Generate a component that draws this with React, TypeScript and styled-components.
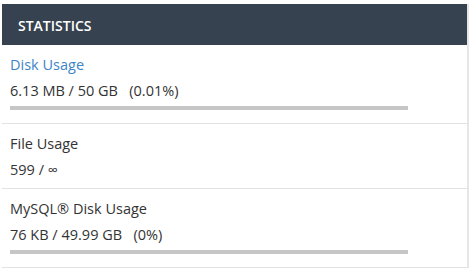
import React from "react";
import styled, { createGlobalStyle } from "styled-components";

const Global = createGlobalStyle`
  html, body { margin: 0; padding: 0; background: #ffffff; }
  body { font-family: "Open Sans", "Noto Sans", Arial, sans-serif; color: #333333; }
`;

const Panel = styled.section`
  margin: 4px 0 0 2px;
  width: 467px;
  border-right: 2px solid #e6e6e6;
  box-sizing: border-box;
  background: #ffffff;
`;

const Header = styled.header`
  height: 41px;
  display: flex;
  align-items: center;
  padding: 2px 0 0 16px;
  box-sizing: border-box;
  background: #36424f;
  color: #ffffff;
  font-size: 14px;
  font-weight: 600;
  text-transform: uppercase;
  letter-spacing: 0;
`;

const Row = styled.div`
  padding: 10px 8px 8px 8px;
  border-bottom: 1px solid #e2e2e2;
`;

const Title = styled.div<{ $link?: boolean }>`
  font-size: 14.5px;
  line-height: 20px;
  color: ${(p) => (p.$link ? "#3d84c6" : "#333333")};
  margin-bottom: 6px;
`;

const Value = styled.div`
  font-size: 14.5px;
  line-height: 20px;
  color: #333333;
  white-space: pre;
`;

const Track = styled.div`
  width: 398px;
  height: 4px;
  margin: 5px 0 5px 0;
  background: #e9e9e9;
  overflow: hidden;
`;

const Fill = styled.div`
  height: 100%;
  width: 100%;
  background: #c6c6c6;
`;

type Stat = { title: string; value: string; bar?: boolean; link?: boolean };

const stats: Stat[] = [
  { title: "Disk Usage", value: "6.13 MB / 50 GB   (0.01%)", bar: true, link: true },
  { title: "File Usage", value: "599 / ∞" },
  { title: "MySQL® Disk Usage", value: "76 KB / 49.99 GB   (0%)", bar: true },
];

export default function App() {
  return (
    <>
      <Global />
      <Panel>
        <Header>Statistics</Header>
        {stats.map((s) => (
          <Row key={s.title}>
            <Title $link={s.link}>{s.title}</Title>
            <Value>{s.value}</Value>
            {s.bar && (
              <Track>
                <Fill />
              </Track>
            )}
          </Row>
        ))}
      </Panel>
    </>
  );
}
